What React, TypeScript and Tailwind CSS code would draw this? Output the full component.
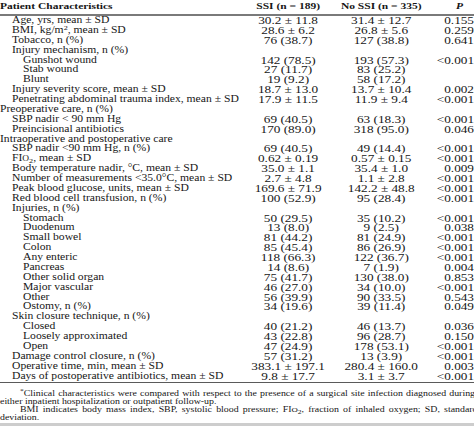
import React from 'react';

interface Row {
  label: React.ReactNode;
  level: 0 | 1 | 2;
  ssi?: string;
  noSsi?: string;
  p?: string;
}

const FiO2 = ({ small }: { small?: boolean }) => (
  <>
    FI<span className={small ? 'text-[7px]' : 'text-[7.5px]'}>O</span>
    <sub className={small ? 'text-[6px] leading-none' : 'text-[6.5px] leading-none'}>2</sub>
  </>
);

const rows: Row[] = [
  { label: 'Age, yrs, mean ± SD', level: 1, ssi: '30.2 ± 11.8', noSsi: '31.4 ± 12.7', p: '0.155' },
  {
    label: (
      <>
        BMI, kg/m<sup className="text-[6.5px] leading-none">2</sup>, mean ± SD
      </>
    ),
    level: 1,
    ssi: '28.6 ± 6.2',
    noSsi: '26.8 ± 5.6',
    p: '0.259',
  },
  { label: 'Tobacco, n (%)', level: 1, ssi: '76 (38.7)', noSsi: '127 (38.8)', p: '0.641' },
  { label: 'Injury mechanism, n (%)', level: 1 },
  { label: 'Gunshot wound', level: 2, ssi: '142 (78.5)', noSsi: '193 (57.3)', p: '<0.001' },
  { label: 'Stab wound', level: 2, ssi: '27 (11.7)', noSsi: '83 (25.2)' },
  { label: 'Blunt', level: 2, ssi: '19 (9.2)', noSsi: '58 (17.2)' },
  { label: 'Injury severity score, mean ± SD', level: 1, ssi: '18.7 ± 13.0', noSsi: '13.7 ± 10.4', p: '0.002' },
  { label: 'Penetrating abdominal trauma index, mean ± SD', level: 1, ssi: '17.9 ± 11.5', noSsi: '11.9 ± 9.4', p: '<0.001' },
  { label: 'Preoperative care, n (%)', level: 0 },
  { label: 'SBP nadir < 90 mm Hg', level: 1, ssi: '69 (40.5)', noSsi: '63 (18.3)', p: '<0.001' },
  { label: 'Preincisional antibiotics', level: 1, ssi: '170 (89.0)', noSsi: '318 (95.0)', p: '0.046' },
  { label: 'Intraoperative and postoperative care', level: 0 },
  { label: 'SBP nadir <90 mm Hg, n (%)', level: 1, ssi: '69 (40.5)', noSsi: '49 (14.4)', p: '<0.001' },
  {
    label: (
      <>
        <FiO2 />, mean ± SD
      </>
    ),
    level: 1,
    ssi: '0.62 ± 0.19',
    noSsi: '0.57 ± 0.15',
    p: '<0.001',
  },
  { label: 'Body temperature nadir, °C, mean ± SD', level: 1, ssi: '35.0 ± 1.1', noSsi: '35.4 ± 1.0', p: '0.009' },
  { label: 'Number of measurements <35.0°C, mean ± SD', level: 1, ssi: '2.7 ± 4.8', noSsi: '1.1 ± 2.8', p: '<0.001' },
  { label: 'Peak blood glucose, units, mean ± SD', level: 1, ssi: '169.6 ± 71.9', noSsi: '142.2 ± 48.8', p: '<0.001' },
  { label: 'Red blood cell transfusion, n (%)', level: 1, ssi: '100 (52.9)', noSsi: '95 (28.4)', p: '<0.001' },
  { label: 'Injuries, n (%)', level: 1 },
  { label: 'Stomach', level: 2, ssi: '50 (29.5)', noSsi: '35 (10.2)', p: '<0.001' },
  { label: 'Duodenum', level: 2, ssi: '13 (8.0)', noSsi: '9 (2.5)', p: '0.038' },
  { label: 'Small bowel', level: 2, ssi: '81 (44.2)', noSsi: '81 (24.9)', p: '<0.001' },
  { label: 'Colon', level: 2, ssi: '85 (45.4)', noSsi: '86 (26.9)', p: '<0.001' },
  { label: 'Any enteric', level: 2, ssi: '118 (66.3)', noSsi: '122 (36.7)', p: '<0.001' },
  { label: 'Pancreas', level: 2, ssi: '14 (8.6)', noSsi: '7 (1.9)', p: '0.004' },
  { label: 'Other solid organ', level: 2, ssi: '75 (41.7)', noSsi: '130 (38.0)', p: '0.853' },
  { label: 'Major vascular', level: 2, ssi: '46 (27.0)', noSsi: '34 (10.0)', p: '<0.001' },
  { label: 'Other', level: 2, ssi: '56 (39.9)', noSsi: '90 (33.5)', p: '0.543' },
  { label: 'Ostomy, n (%)', level: 2, ssi: '34 (19.6)', noSsi: '39 (11.4)', p: '0.049' },
  { label: 'Skin closure technique, n (%)', level: 1 },
  { label: 'Closed', level: 2, ssi: '40 (21.2)', noSsi: '46 (13.7)', p: '0.036' },
  { label: 'Loosely approximated', level: 2, ssi: '43 (22.8)', noSsi: '96 (28.7)', p: '0.150' },
  { label: 'Open', level: 2, ssi: '47 (24.9)', noSsi: '178 (53.1)', p: '<0.001' },
  { label: 'Damage control closure, n (%)', level: 1, ssi: '57 (31.2)', noSsi: '13 (3.9)', p: '<0.001' },
  { label: 'Operative time, min, mean ± SD', level: 1, ssi: '383.1 ± 197.1', noSsi: '280.4 ± 160.0', p: '0.003' },
  { label: 'Days of postoperative antibiotics, mean ± SD', level: 1, ssi: '9.8 ± 17.7', noSsi: '3.1 ± 3.7', p: '<0.001' },
];

// the scan is stretched horizontally, so the table is laid out narrow and widened by 1.25
const indent = ['pl-0', 'pl-[9.6px]', 'pl-[18.4px]'];
const cols = 'grid grid-cols-[200px_61px_88px_33px]';

const App: React.FC = () => {
  return (
    <div className="w-[474px] h-[426px] overflow-hidden bg-white">
      <div className="w-[382px] origin-top-left scale-x-125 text-[#161616] font-['Liberation_Serif',serif]">
        {/* Header */}
        <div className={`${cols} h-[14px] items-center font-bold text-[9.2px] leading-none`}>
          <div>Patient Characteristics</div>
          <div className="text-center">SSI (n = 189)</div>
          <div className="text-center">No SSI (n = 335)</div>
          <div className="text-right pr-[11.5px] italic">P</div>
        </div>
        <div className="h-[2px] bg-[#7a7a7a]" />

        {/* Body */}
        <div className="text-[10.6px]">
          {rows.map((r, i) => (
            <div key={i} className={`${cols} h-[9.89px] leading-[9.89px] whitespace-nowrap`}>
              <div className={`${indent[r.level]} text-[9.3px]`}>{r.label}</div>
              <div className="text-center">{r.ssi}</div>
              <div className="text-center">{r.noSsi}</div>
              <div className="text-right pr-[2.8px]">{r.p}</div>
            </div>
          ))}
        </div>
        <div className="h-px bg-[#5a5a5a] mt-px" />

        {/* Footnotes */}
        <div className="mt-[7px] text-[7.9px] leading-[8px] whitespace-nowrap">
          <div className="pl-[16px] pr-[2px] text-justify [text-align-last:justify]">
            <sup className="text-[6px] leading-none">*</sup>Clinical characteristics were compared with respect to the presence of a surgical site infection diagnosed during
          </div>
          <div>either inpatient hospitalization or outpatient follow-up.</div>
          <div className="pl-[16px] text-justify [text-align-last:justify]">
            BMI indicates body mass index, SBP, systolic blood pressure; <FiO2 small />, fraction of inhaled oxygen; SD, standard
          </div>
          <div>deviation.</div>
        </div>
        <div className="mt-[1px] h-[6px] bg-[#cdcdcd]" />
      </div>
    </div>
  );
};

export default App;
